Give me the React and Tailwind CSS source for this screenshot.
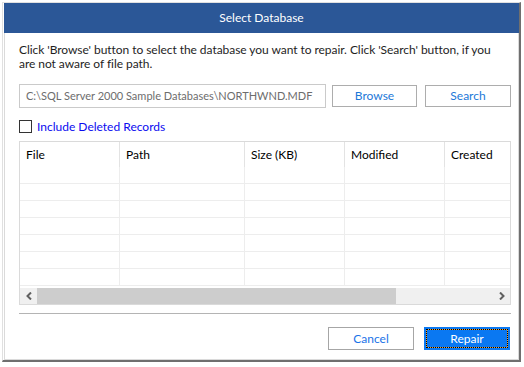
import React from "react"

const columns = ["File", "Path", "Size (KB)", "Modified", "Created"]
const rows = [1, 2, 3, 4, 5, 6, 7]

const Chevron = ({ dir }) => (
    <svg width="6" height="8" viewBox="0 0 6 8">
        {dir === "left"
            ? <path d="M5 0.5 L1.5 4 L5 7.5" fill="none" stroke="#606060" strokeWidth="2" />
            : <path d="M1 0.5 L4.5 4 L1 7.5" fill="none" stroke="#606060" strokeWidth="2" />}
    </svg>
)

const App = () => {
    return (
        <div className="w-[524px] h-[367px] bg-white pl-[2px] pt-[2px] font-['Lato',sans-serif] text-[12px]">
            <div className="w-[519px] h-[360px] flex flex-col pl-px border-t border-l border-[#e0e0e0] border-r-2 border-b-2 border-r-[#6f6f6f] border-b-[#6f6f6f]">
                <div className="h-[30px] bg-[#2b5797] text-white flex items-center justify-center">
                    Select Database
                </div>
                <div className="flex-1 border-x border-b border-[#dadada] pl-[14px] pt-[10px]">
                    <div className="w-[492px] flex flex-col">
                        <p className="leading-[14px] text-[#1e1e1e] tracking-[-0.05px]">
                            Click 'Browse' button to select the database you want to repair. Click 'Search' button, if you<br />
                            are not aware of file path.
                        </p>

                        <div className="mt-[13px] flex items-center">
                            <div className="w-[307px] h-[24px] border border-[#cacaca] flex items-center pl-[6px] text-[11px] text-[#6d6d6d] whitespace-nowrap overflow-hidden">
                                C:\SQL Server 2000 Sample Databases\NORTHWND.MDF
                            </div>
                            <button className="ml-[6px] w-[85px] h-[22px] border border-[#adadad] text-[#1c78d8]">Browse</button>
                            <button className="ml-[8px] w-[86px] h-[22px] border border-[#adadad] text-[#1c78d8]">Search</button>
                        </div>

                        <div className="mt-[12px] h-[13px] flex items-center gap-[5px]">
                            <span className="w-[13px] h-[13px] border border-[#333333] bg-white"></span>
                            <label className="text-[#0b0bef] leading-[13px]">Include Deleted Records</label>
                        </div>

                        <div className="mt-[8px] h-[164px] border border-[#dadada] flex flex-col">
                            <div className="h-[25px] grid grid-cols-[100px_125px_100px_100px_1fr]">
                                {columns.map((c, i) => (
                                    <div key={i} className={`flex items-center pl-[6px] text-black ${i < 4 ? "border-r border-[#e3e3e3]" : ""}`}>{c}</div>
                                ))}
                            </div>
                            {rows.map((r) => (
                                <div key={r} className="h-[17px] grid grid-cols-[100px_125px_100px_100px_1fr] border-b border-[#ededed]">
                                    <div className="border-r border-[#ededed]"></div>
                                    <div className="border-r border-[#ededed]"></div>
                                    <div className="border-r border-[#ededed]"></div>
                                    <div className="border-r border-[#ededed]"></div>
                                    <div></div>
                                </div>
                            ))}
                            <div className="mt-[2px] h-[16px] flex bg-[#f0f0f0]">
                                <div className="w-[17px] flex items-center justify-center"><Chevron dir="left" /></div>
                                <div className="w-[359px] bg-[#cdcdcd]"></div>
                                <div className="flex-1"></div>
                                <div className="w-[17px] flex items-center justify-center"><Chevron dir="right" /></div>
                            </div>
                        </div>

                        <div className="mt-[8px] h-px bg-[#b4b4b4]"></div>

                        <div className="mt-[13px] flex justify-end gap-[10px] pr-px">
                            <button className="w-[86px] h-[23px] border border-[#a6a6a6] text-[#1a73e8]">Cancel</button>
                            <button className="w-[86px] h-[23px] bg-[#0a78f2] text-white p-[2px]">
                                <span className="w-full h-full flex items-center justify-center border border-[#f0a030] outline-1 outline-dotted outline-black -outline-offset-1">Repair</span>
                            </button>
                        </div>
                    </div>
                </div>
            </div>
        </div>
    )
}

export default App
